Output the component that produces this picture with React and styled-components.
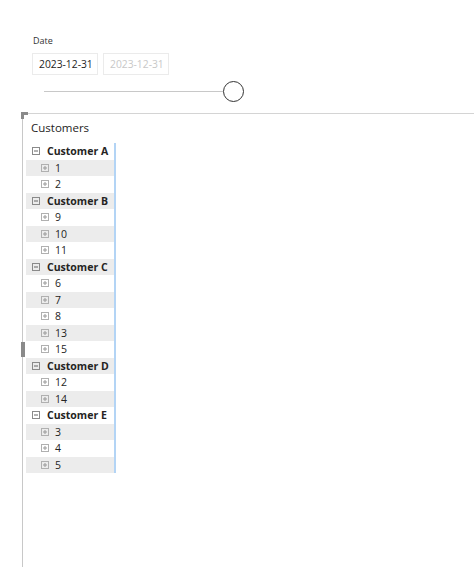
import React from 'react'
import styled, { createGlobalStyle } from 'styled-components'

const GlobalStyle = createGlobalStyle`
  html, body { margin: 0; padding: 0; background: #fff; }
  body { font-family: "Segoe UI", "Open Sans", "Noto Sans", sans-serif; color: #252423; }
`

const Page = styled.div`
  width: 474px;
  height: 567px;
  overflow: hidden;
  display: flex;
  flex-direction: column;
`

const Filter = styled.div`
  padding: 35px 0 0 33px;
  height: 113px;
  flex: none;
  box-sizing: border-box;
`

const Label = styled.div`
  font-size: 9px;
  line-height: 12px;
  color: #333;
`

const DateRow = styled.div`
  display: flex;
  gap: 5px;
  margin-top: 6px;
  margin-left: -1px;
`

const DateBox = styled.div`
  width: 66px;
  height: 22px;
  box-sizing: border-box;
  border: 1px solid #ebebeb;
  font-size: 10.3px;
  line-height: 20px;
  padding-left: 6px;
  color: ${p => (p.$muted ? '#c8c8c8' : '#252423')};
`

const SliderRow = styled.div`
  display: flex;
  align-items: center;
  margin: 6px 0 0 11px;
`

const Track = styled.div`
  width: 179px;
  height: 1px;
  background: #c8c8c8;
`

const Thumb = styled.div`
  width: 19px;
  height: 19px;
  border: 1.6px solid #333;
  border-radius: 50%;
  background: #fff;
`

const Visual = styled.div`
  position: relative;
  margin-left: 22px;
  flex: 1;
  border-top: 1px solid #d4d4d4;
  border-left: 1px solid #c8c8c8;
  padding: 6px 0 0 8px;
`

const Grip = styled.div`
  position: absolute;
  left: -2px;
  top: -2px;
  width: 7px;
  height: 7px;
  background: linear-gradient(#8a8a8a, #8a8a8a) 0 0 / 7px 3px no-repeat,
    linear-gradient(#8a8a8a, #8a8a8a) 0 0 / 3px 7px no-repeat;
`

const SideHandle = styled.div`
  position: absolute;
  left: -2px;
  top: 228px;
  width: 4px;
  height: 15px;
  background: #8a8a8a;
`

const Title = styled.div`
  font-size: 11.5px;
  line-height: 16px;
  color: #252423;
`

const Table = styled.div`
  margin: 7px 0 0 -5px;
  width: 88px;
  border-right: 2px solid #b3d4f5;
`

const Row = styled.div`
  display: flex;
  align-items: center;
  height: 16.5px;
  background: ${p => (p.$shade ? '#ececec' : '#fff')};
  padding-left: ${p => (p.$child ? '15px' : '6px')};
  gap: ${p => (p.$child ? '6px' : '7px')};
  font-size: 10.5px;
  font-weight: ${p => (p.$child ? 400 : 700)};
  color: #252423;
  white-space: nowrap;
`

const Toggle = ({ open }) => (
  <svg width="8" height="8" viewBox="0 0 8 8" style={{ flex: 'none' }}>
    <rect x="0.5" y="0.5" width="7" height="7" fill="none" stroke={open ? '#8a8a8a' : '#b0b0b0'} />
    <line x1="2" y1="4" x2="6" y2="4" stroke={open ? '#666' : '#999'} />
    {!open && <line x1="4" y1="2" x2="4" y2="6" stroke="#999" />}
  </svg>
)

const groups = [
  ['Customer A', ['1', '2']],
  ['Customer B', ['9', '10', '11']],
  ['Customer C', ['6', '7', '8', '13', '15']],
  ['Customer D', ['12', '14']],
  ['Customer E', ['3', '4', '5']],
]

export default function App() {
  const rows = []
  groups.forEach(([name, kids]) => {
    rows.push({ name, child: false })
    kids.forEach(k => rows.push({ name: k, child: true }))
  })

  return (
    <Page>
      <GlobalStyle />
      <Filter>
        <Label>Date</Label>
        <DateRow>
          <DateBox>2023-12-31</DateBox>
          <DateBox $muted>2023-12-31</DateBox>
        </DateRow>
        <SliderRow>
          <Track />
          <Thumb />
        </SliderRow>
      </Filter>
      <Visual>
        <Grip />
        <SideHandle />
        <Title>Customers</Title>
        <Table>
          {rows.map((r, i) => (
            <Row key={i} $child={r.child} $shade={i % 2 === 1}>
              <Toggle open={!r.child} />
              <span>{r.name}</span>
            </Row>
          ))}
        </Table>
      </Visual>
    </Page>
  )
}
